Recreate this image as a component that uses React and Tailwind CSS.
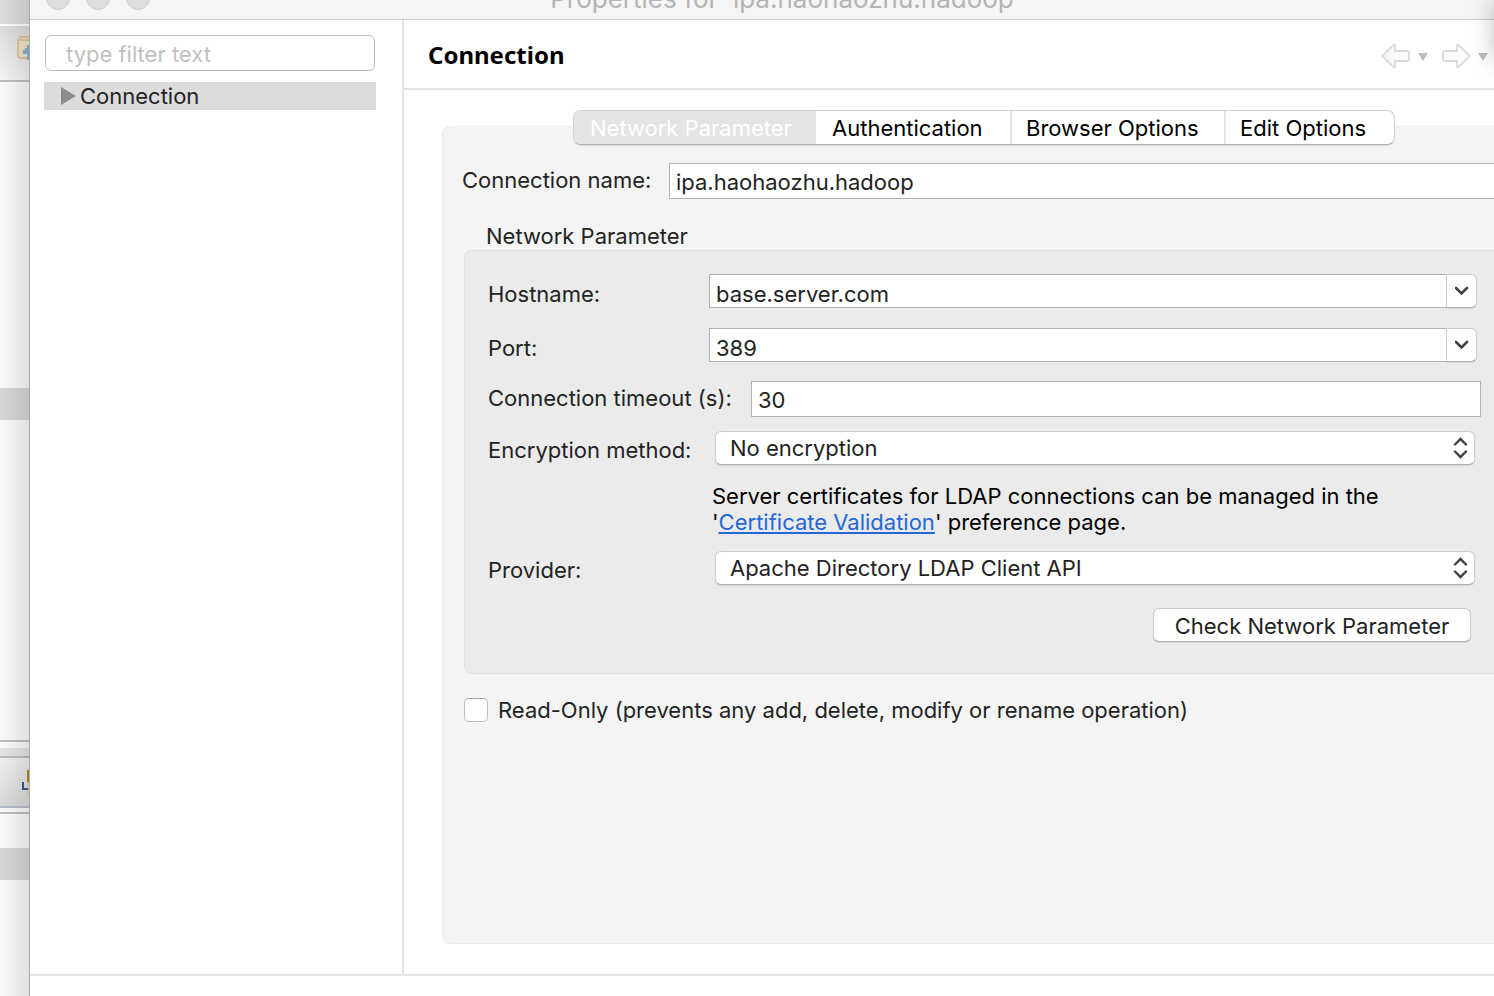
import React, { useState } from 'react';

const TABS = ['Network Parameter', 'Authentication', 'Browser Options', 'Edit Options'];

const TAB_STYLES = {
  'Network Parameter': 'w-[242px] pl-4',
  Authentication: 'w-[196px] pl-4',
  'Browser Options': 'w-[214px] pl-[14px]',
  'Edit Options': 'w-[168px] pl-[14px]'
};

const fieldBorder = 'border border-[#b0b0b0] bg-white';
const popupBorder =
  'rounded-md border border-[#cdcdcd] border-b-[#b2b2b2] bg-white shadow-[0_1px_1px_rgba(0,0,0,0.1)]';

// Strip of the application behind the dialog
const BackgroundStrip = () => (
  <div className="relative flex w-[30px] shrink-0 flex-col overflow-hidden border-r border-[#a8a8a8] bg-[#fafafa]">
    <div className="h-6 shrink-0 bg-[#dcdcdc]" />
    <div className="h-[2px] shrink-0 bg-white" />
    <div className="flex h-[54px] shrink-0 justify-end bg-gradient-to-b from-[#dcdcdc] to-[#f4f4f4] pt-[10px]">
      <svg className="h-6 w-3" viewBox="0 0 12 24" fill="none">
        <path d="M12 22H3L1 20V4H3V1H12" fill="#efe3c8" stroke="#dcc6a2" strokeWidth="2" />
        <path d="M3 4H12" stroke="#dcc6a2" strokeWidth="2" />
        <path d="M12 9H10V12H8V14H6V18H10V24H12Z" fill="#8eb0ca" />
      </svg>
    </div>
    <div className="h-[2px] shrink-0 bg-[#bdbdbd]" />
    <div className="h-[306px] shrink-0" />
    <div className="h-8 shrink-0 bg-[#d6d6d6]" />
    <div className="h-80 shrink-0" />
    <div className="h-[2px] shrink-0 bg-[#bdbdbd]" />
    <div className="h-[6px] shrink-0" />
    <div className="h-2 shrink-0 bg-[#e4e4e4]" />
    <div className="h-[2px] shrink-0 bg-[#bdbdbd]" />
    <div className="flex h-12 shrink-0 justify-end bg-gradient-to-b from-[#f0f0f0] to-[#d8d8d8] pt-3">
      <svg className="h-6 w-2" viewBox="0 0 8 24" fill="none">
        <path d="M6 0H8V12H6Z" fill="#b58526" />
        <path d="M6 12H8V24H6Z" fill="#e6cfa4" />
        <path d="M2 12V19H7" stroke="#2f5597" strokeWidth="2" />
      </svg>
    </div>
    <div className="h-[2px] shrink-0 bg-[#b4bbcd]" />
    <div className="h-1 shrink-0" />
    <div className="h-[2px] shrink-0 bg-[#bdbdbd]" />
    <div className="h-[34px] shrink-0" />
    <div className="h-8 shrink-0 bg-[#d6d6d6]" />
    <div className="pointer-events-none absolute inset-0 bg-gradient-to-r from-transparent to-black/10" />
  </div>
);

const TitleBar = () => (
  <header className="flex h-5 shrink-0 items-end overflow-hidden border-b border-[#cacaca] bg-[#f5f5f5] pr-20 pl-4">
    <div className="flex gap-4 pb-[9px]">
      {['close', 'minimize', 'zoom'].map((name) => (
        <button
          key={name}
          aria-label={name}
          className="h-6 w-6 rounded-full border border-[#cccccc] bg-[#dedede]"
        />
      ))}
    </div>
    <h1 className="flex-1 pb-[7px] text-center text-[26px] leading-[26px] whitespace-pre text-[#b4b4b4]">
      {'Properties for \u00a0ipa.haohaozhu.hadoop'}
    </h1>
  </header>
);

const Sidebar = () => (
  <aside className="w-[374px] shrink-0 border-r-2 border-[#e4e4e4] px-[14px] pt-[15px]">
    <input
      aria-label="Filter"
      placeholder="type filter text"
      className="mx-px block h-9 w-[330px] rounded-md border border-[#bcbcbc] px-5 pt-[2px] text-[22px] text-[#232323] placeholder:text-[#bfbfbf]"
    />
    <button className="mt-[11px] flex h-7 w-[332px] items-center bg-[#dcdcdc] pl-4 text-[22px] leading-7">
      <svg className="mr-1 h-[18px] w-4" viewBox="0 0 16 18">
        <path d="M1 0L16 9L1 18Z" fill="#8b8b8b" />
      </svg>
      Connection
    </button>
  </aside>
);

const DropArrow = ({ label }) => (
  <button aria-label={label}>
    <svg className="mt-[2px] h-2 w-[10px]" viewBox="0 0 10 8">
      <path d="M0 0H10L5 8Z" fill="#bdbdbd" />
    </svg>
  </button>
);

const ARROW_PATH = 'M1.2 12L12.5 1H14V7H26Q28 7 28 9V15Q28 17 26 17H14V23H12.5Z';

const PageHeader = () => (
  <div className="flex h-[70px] shrink-0 items-center border-b-2 border-[#e4e4e4] pr-[6px] pl-6">
    <h2 className="flex-1 pt-[2px] font-['Noto_Sans'] text-2xl font-bold text-black">Connection</h2>
    <div className="flex items-center pt-1">
      <button aria-label="Back">
        <svg className="h-6 w-[30px]" viewBox="0 0 30 24">
          <path d={ARROW_PATH} fill="#fafafa" stroke="#dcdcdc" strokeWidth="2" />
        </svg>
      </button>
      <span className="ml-[7px] flex">
        <DropArrow label="Back history" />
      </span>
      <button aria-label="Forward" className="ml-[13px]">
        <svg className="h-6 w-[30px] -scale-x-100" viewBox="0 0 30 24">
          <path d={ARROW_PATH} fill="#fafafa" stroke="#dcdcdc" strokeWidth="2" />
        </svg>
      </button>
      <span className="ml-[7px] flex">
        <DropArrow label="Forward history" />
      </span>
    </div>
  </div>
);

const ComboBox = ({ id, label, value }) => (
  <div className="mr-1 flex h-[34px]">
    <label htmlFor={id} className="w-[221px] shrink-0 pt-[7px]">
      {label}
    </label>
    <input
      id={id}
      defaultValue={value}
      className={`min-w-0 flex-1 border-r-0 px-[6px] pt-[6px] ${fieldBorder}`}
    />
    <button
      aria-label={`${label} history`}
      className="flex w-[31px] items-center justify-center rounded-r-md border border-[#cdcdcd] border-b-[#b2b2b2] bg-white shadow-[0_1px_1px_rgba(0,0,0,0.1)]"
    >
      <svg className="h-[10px] w-[14px]" viewBox="0 0 14 10" fill="none">
        <path d="M1 2L6.5 7.5L12 2" stroke="#404040" strokeWidth="2.6" strokeLinecap="round" />
      </svg>
    </button>
  </div>
);

const Popup = ({ id, label, options }) => (
  <div className="mr-[6px] flex h-[34px]">
    <label htmlFor={id} className="w-[227px] shrink-0 pt-[6px]">
      {label}
    </label>
    <div className="relative flex-1">
      <select id={id} className={`block h-full w-full appearance-none pl-[14px] ${popupBorder}`}>
        {options.map((option) => (
          <option key={option}>{option}</option>
        ))}
      </select>
      <svg
        className="pointer-events-none absolute top-[6px] right-[6px] h-[22px] w-4"
        viewBox="0 0 16 22"
        fill="none"
      >
        <path
          d="M2 7.5L7.5 2L13 7.5M2 14.5L7.5 20L13 14.5"
          stroke="#404040"
          strokeWidth="2.4"
          strokeLinecap="round"
        />
      </svg>
    </div>
  </div>
);

const NetworkGroup = () => (
  <section
    aria-label="Network Parameter"
    className="mr-5 ml-[21px] rounded-lg border border-[#e0e0e0] bg-[#ebebeb] px-[23px] pt-[23px] pb-[31px]"
  >
    <ComboBox id="hostname" label="Hostname:" value="base.server.com" />
    <div className="mt-5">
      <ComboBox id="port" label="Port:" value="389" />
    </div>
    <div className="mt-[19px] flex h-9">
      <label htmlFor="timeout" className="w-[263px] shrink-0 pt-1">
        Connection timeout (s):
      </label>
      <input
        id="timeout"
        defaultValue="30"
        className={`min-w-0 flex-1 px-[6px] pt-[2px] ${fieldBorder}`}
      />
    </div>
    <div className="mt-[14px]">
      <Popup id="encryption" label="Encryption method:" options={['No encryption', 'Use SSL encryption (ldaps://)', 'Use StartTLS extension']} />
    </div>
    <p className="mt-[18px] ml-56 text-black">
      Server certificates for LDAP connections can be managed in the
      <br />
      '
      <a href="#certificates" className="text-[#2468d8] underline decoration-2 underline-offset-2">
        Certificate Validation
      </a>
      ' preference page.
    </p>
    <div className="mt-4">
      <Popup id="provider" label="Provider:" options={['Apache Directory LDAP Client API', 'JNDI (Java Naming and Directory Interface)']} />
    </div>
    <div className="mt-[23px] mr-[10px] flex justify-end">
      <button className={`h-[34px] w-[318px] pt-[2px] ${popupBorder}`}>Check Network Parameter</button>
    </div>
  </section>
);

const ConnectionPage = () => {
  const [activeTab, setActiveTab] = useState(TABS[0]);
  const [readOnly, setReadOnly] = useState(false);

  return (
    <div className="-mr-8 flex-1 rounded-lg border border-[#ebebeb] bg-[#f4f4f4] text-[22px] leading-[26px] text-[#232323]">
      {/* Tabs */}
      <div className="-mt-[17px] flex justify-center">
        <div
          role="tablist"
          className="flex h-[35px] divide-x-2 divide-[#e4e4e4] overflow-hidden rounded-lg border border-[#d2d2d2] border-b-[#b2b2b2] bg-white shadow-[0_1px_1px_rgba(0,0,0,0.1)]"
        >
          {TABS.map((tab) => (
            <button
              key={tab}
              role="tab"
              aria-selected={tab === activeTab}
              onClick={() => setActiveTab(tab)}
              className={`text-left whitespace-nowrap ${TAB_STYLES[tab]} ${
                tab === activeTab ? 'bg-[#e4e4e4] text-white' : 'text-black'
              }`}
            >
              {tab}
            </button>
          ))}
        </div>
      </div>

      <div className="mt-[18px] flex h-9 pl-[19px]">
        <label htmlFor="connection-name" className="w-[207px] shrink-0 pt-1">
          Connection name:
        </label>
        <input
          id="connection-name"
          defaultValue="ipa.haohaozhu.hadoop"
          className={`mr-5 min-w-0 flex-1 px-[6px] pt-[2px] ${fieldBorder}`}
        />
      </div>

      <h3 className="mt-6 mb-px ml-[43px]">Network Parameter</h3>
      <NetworkGroup />

      <label className="mt-[23px] ml-[21px] flex items-center gap-[10px]">
        <input
          type="checkbox"
          checked={readOnly}
          onChange={(e) => setReadOnly(e.target.checked)}
          className="h-6 w-6 appearance-none rounded-[5px] border border-[#bdbdbd] border-t-[#a8a8a8] bg-white checked:bg-[#2468d8]"
        />
        Read-Only (prevents any add, delete, modify or rename operation)
      </label>
    </div>
  );
};

const App = () => (
  <div className="relative flex h-screen overflow-hidden bg-white font-[Inter,sans-serif] text-[#232323]">
    <BackgroundStrip />
    <div className="flex min-w-0 flex-1 flex-col">
      <TitleBar />
      <div className="flex min-h-0 flex-1">
        <Sidebar />
        <main className="flex min-w-0 flex-1 flex-col overflow-hidden">
          <PageHeader />
          <div className="flex flex-1 pt-9 pb-[30px] pl-[38px]">
            <ConnectionPage />
          </div>
        </main>
      </div>
      <footer className="h-[22px] shrink-0 border-t-2 border-[#e4e4e4]" />
    </div>
    {/* Shadow of the neighbouring window */}
    <div className="pointer-events-none absolute top-0 left-full h-[60px] w-10 shadow-[0_0_24px_rgba(0,0,0,0.25)]" />
  </div>
);

export default App;
